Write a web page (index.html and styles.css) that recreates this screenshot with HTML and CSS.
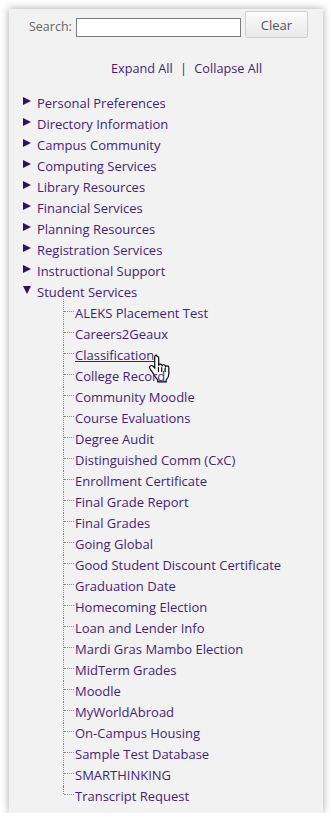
FILE: index.html
```html
<!DOCTYPE html>
<html>
<head>
<meta charset="utf-8">
<link rel="stylesheet" href="styles.css">
</head>
<body>
<div class="panel">
  <div class="search-row">
    <label class="search-label" for="q">Search:</label>
    <input class="search-input" id="q" type="text">
    <button class="clear-btn" type="button">Clear</button>
  </div>
  <div class="expand-row">
    <a class="link" href="#">Expand All</a>
    <span class="sep">|</span>
    <a class="link" href="#">Collapse All</a>
  </div>
  <ul class="tree">
    <li class="node closed"><span class="toggle"></span><a class="link" href="#">Personal Preferences</a></li>
    <li class="node closed"><span class="toggle"></span><a class="link" href="#">Directory Information</a></li>
    <li class="node closed"><span class="toggle"></span><a class="link" href="#">Campus Community</a></li>
    <li class="node closed"><span class="toggle"></span><a class="link" href="#">Computing Services</a></li>
    <li class="node closed"><span class="toggle"></span><a class="link" href="#">Library Resources</a></li>
    <li class="node closed"><span class="toggle"></span><a class="link" href="#">Financial Services</a></li>
    <li class="node closed"><span class="toggle"></span><a class="link" href="#">Planning Resources</a></li>
    <li class="node closed"><span class="toggle"></span><a class="link" href="#">Registration Services</a></li>
    <li class="node closed"><span class="toggle"></span><a class="link" href="#">Instructional Support</a></li>
    <li class="node open"><span class="toggle"></span><a class="link" href="#">Student Services</a>
      <ul class="children">
        <li class="leaf"><a class="link" href="#">ALEKS Placement Test</a></li>
        <li class="leaf"><a class="link" href="#">Careers2Geaux</a></li>
        <li class="leaf"><a class="link hover" href="#">Classification</a><svg class="cursor" width="21" height="31" viewBox="0 0 18 24"><path d="M6.5 0.5c-1 0-1.6 0.7-1.6 1.6v9.4l-1.3-1.4c-0.8-0.8-2-0.9-2.7-0.1c-0.6 0.6-0.5 1.5 0 2.2l3.4 5.1c1 1.6 2 3.5 3.2 4.7v1.5h7.2v-1.8c1.3-1.300 2.3-3.2 2.3-5.3v-5.2c0-0.8-0.6-1.5-1.5-1.5c-0.8 0-1.4 0.6-1.4 1.4v-0.8c0-0.8-0.6-1.5-1.5-1.5c-0.8 0-1.4 0.6-1.4 1.4v-0.5c0-0.8-0.6-1.5-1.5-1.5c-0.8 0-1.4 0.6-1.4 1.4v-6.5c0-1-0.6-1.6-1.6-1.6z" fill="#fff" stroke="#000" stroke-width="1"/><path d="M10.9 11v4M13.8 11.5v3.5M8.1 10.5v4.5" stroke="#000" stroke-width="1" fill="none"/></svg></li>
        <li class="leaf"><a class="link" href="#">College Record</a></li>
        <li class="leaf"><a class="link" href="#">Community Moodle</a></li>
        <li class="leaf"><a class="link" href="#">Course Evaluations</a></li>
        <li class="leaf"><a class="link" href="#">Degree Audit</a></li>
        <li class="leaf"><a class="link" href="#">Distinguished Comm (CxC)</a></li>
        <li class="leaf"><a class="link" href="#">Enrollment Certificate</a></li>
        <li class="leaf"><a class="link" href="#">Final Grade Report</a></li>
        <li class="leaf"><a class="link" href="#">Final Grades</a></li>
        <li class="leaf"><a class="link" href="#">Going Global</a></li>
        <li class="leaf"><a class="link" href="#">Good Student Discount Certificate</a></li>
        <li class="leaf"><a class="link" href="#">Graduation Date</a></li>
        <li class="leaf"><a class="link" href="#">Homecoming Election</a></li>
        <li class="leaf"><a class="link" href="#">Loan and Lender Info</a></li>
        <li class="leaf"><a class="link" href="#">Mardi Gras Mambo Election</a></li>
        <li class="leaf"><a class="link" href="#">MidTerm Grades</a></li>
        <li class="leaf"><a class="link" href="#">Moodle</a></li>
        <li class="leaf"><a class="link" href="#">MyWorldAbroad</a></li>
        <li class="leaf"><a class="link" href="#">On-Campus Housing</a></li>
        <li class="leaf"><a class="link" href="#">Sample Test Database</a></li>
        <li class="leaf"><a class="link" href="#">SMARTHINKING</a></li>
        <li class="leaf last"><a class="link" href="#">Transcript Request</a></li>
      </ul>
    </li>
  </ul>
</div>
</body>
</html>
```

FILE: styles.css
```css
html, body {
  margin: 0;
  padding: 0;
  background: #ffffff;
}
body {
  font-family: "Open Sans", "Noto Sans", "Liberation Sans", sans-serif;
  font-size: 13px;
  color: #461d7c;
}
.panel {
  margin: 9px 0 0 9px;
  width: 314px;
  height: 804px;
  background: #f2f2f2;
  box-shadow: 0 0 8px rgba(0, 0, 0, 0.35);
  overflow: hidden;
}
.search-row {
  display: flex;
  align-items: flex-start;
  padding: 2px 0 0 20px;
  height: 27px;
}
.search-label {
  color: #666666;
  font-size: 12.5px;
  line-height: 18px;
  margin-top: 7px;
  width: 47px;
}
.search-input {
  box-sizing: border-box;
  width: 165px;
  height: 19px;
  margin: 7px 0 0 0;
  padding: 0 2px;
  border: 1px solid #7a7a7a;
  background: #ffffff;
  outline: none;
}
.clear-btn {
  box-sizing: border-box;
  width: 63px;
  height: 27px;
  margin-left: 4px;
  border: 1px solid #cfcfcf;
  border-radius: 2px;
  background: linear-gradient(#fbfbfb, #e9e9e9);
  color: #555555;
  font-family: "Open Sans", "Noto Sans", sans-serif;
  font-size: 13px;
  padding: 0;
}
.expand-row {
  margin-top: 20px;
  padding-left: 102px;
  height: 21px;
  line-height: 21px;
  font-size: 12.7px;
}
.sep {
  color: #461d7c;
  margin: 0 4px;
}
.link {
  color: #461d7c;
  text-decoration: none;
}
.link.hover {
  text-decoration: underline;
}
.tree {
  list-style: none;
  margin: 14px 0 0 0;
  padding: 0 0 0 14px;
}
.node {
  line-height: 21px;
  position: relative;
}
.toggle {
  display: inline-block;
  width: 14px;
  height: 10px;
  position: relative;
  vertical-align: 0;
}
.closed > .toggle::before {
  content: "";
  position: absolute;
  left: 0;
  top: -1px;
  border-top: 4.5px solid transparent;
  border-bottom: 4.5px solid transparent;
  border-left: 8px solid #2e0f6b;
}
.open > .toggle::before {
  content: "";
  position: absolute;
  left: 0;
  top: -1px;
  border-left: 4.5px solid transparent;
  border-right: 4.5px solid transparent;
  border-top: 8px solid #2e0f6b;
}
.children {
  list-style: none;
  margin: 0;
  padding: 0 0 0 40px;
}
.leaf {
  position: relative;
  height: 21px;
  line-height: 21px;
  padding-left: 12px;
}
.leaf::before {
  content: "";
  position: absolute;
  left: 0;
  top: -4px;
  height: 25px;
  border-left: 1px dotted #8a8a8a;
}
.leaf::after {
  content: "";
  position: absolute;
  left: 1px;
  top: 8px;
  width: 10px;
  border-top: 1px dotted #8a8a8a;
}
.leaf + .leaf::before {
  top: 0;
  height: 21px;
}
.leaf + .leaf.last::before {
  height: 8px;
}
.cursor {
  position: absolute;
  left: 86px;
  top: 8px;
}
```
